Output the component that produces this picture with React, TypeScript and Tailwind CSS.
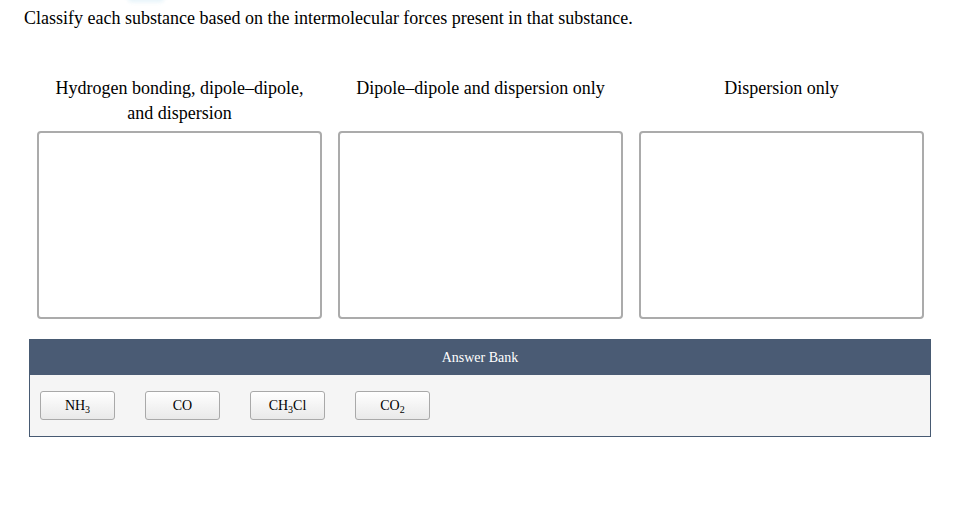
const columns = [
  ['Hydrogen bonding, dipole–dipole,', 'and dispersion'],
  ['Dipole–dipole and dispersion only'],
  ['Dispersion only'],
];

const Chip = ({ children }: { children: React.ReactNode }) => (
  <div className="w-[75px] h-[29px] flex items-center justify-center rounded-[3px] border border-[#a9a9a9] bg-gradient-to-b from-white to-[#e9e9e9] text-[14px] text-black">
    {children}
  </div>
);

const Sub = ({ n }: { n: string }) => <span className="text-[10px] relative top-[4px]">{n}</span>;

export default function App() {
  return (
    <div className="w-[960px] h-[520px] bg-white text-black font-['Liberation_Serif','Times_New_Roman',serif] relative overflow-hidden">
      <div className="absolute left-[128px] top-[-6px] w-[36px] h-[8px] rounded-full bg-[#d9eef7] blur-[2px] opacity-70" />
      <p className="pl-[24px] pt-[8px] text-[18px] leading-[21px]">
        Classify each substance based on the intermolecular forces present in that substance.
      </p>

      <div className="flex gap-[16px] pl-[37px] mt-[47px]">
        {columns.map((lines, i) => (
          <div key={i} className="w-[285px] flex flex-col items-center">
            <div className="h-[55px] text-center text-[18px] leading-[25px]">
              {lines.map((l) => (
                <div key={l}>{l}</div>
              ))}
            </div>
            <div className="w-[285px] h-[188px] rounded-[4px] border-2 border-[#ababab] bg-white" />
          </div>
        ))}
      </div>

      <div className="ml-[29px] mt-[20px] w-[902px] border border-[#475a72]">
        <div className="h-[35px] bg-[#4a5b74] flex items-center justify-center text-white text-[14px]">
          Answer Bank
        </div>
        <div className="h-[61px] bg-[#f5f5f5] flex items-center gap-[30px] pl-[10px] pb-[1px]">
          <Chip>
            NH<Sub n="3" />
          </Chip>
          <Chip>CO</Chip>
          <Chip>
            CH<Sub n="3" />Cl
          </Chip>
          <Chip>
            CO<Sub n="2" />
          </Chip>
        </div>
      </div>
    </div>
  );
}
